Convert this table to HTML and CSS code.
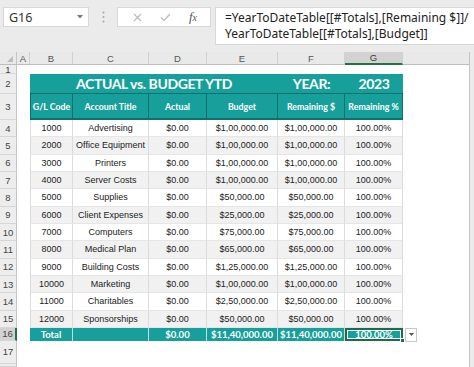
FILE: index.html
```html
<!DOCTYPE html>
<html>
<head>
<meta charset="utf-8">
<link rel="stylesheet" href="styles.css">
</head>
<body>
<div class="fbar">
  <div class="namebox"><span>G16</span><svg width="6" height="4" viewBox="0 0 6 4"><polygon points="0,0 6,0 3,3.5" fill="#777"/></svg></div>
  <div class="grip"><svg width="3" height="12" viewBox="0 0 3 12"><circle cx="1.5" cy="1.5" r="1" fill="#a8a8a8"/><circle cx="1.5" cy="6" r="1" fill="#a8a8a8"/><circle cx="1.5" cy="10.5" r="1" fill="#a8a8a8"/></svg></div>
  <div class="fnbox">
    <svg width="9" height="9" viewBox="0 0 9 9"><path d="M1 1 L8 8 M8 1 L1 8" stroke="#bdbdbd" stroke-width="1.3" fill="none"/></svg>
    <svg width="11" height="9" viewBox="0 0 11 9"><path d="M1 4.5 L4 7.5 L10 1" stroke="#bdbdbd" stroke-width="1.3" fill="none"/></svg>
    <span class="fx">f<span class="fxs">x</span></span>
  </div>
  <div class="formula">=YearToDateTable[[#Totals],[Remaining $]]/<br>YearToDateTable[[#Totals],[Budget]]</div>
</div>
<div class="sheet">
  <div class="ch corner"><svg width="6" height="6" viewBox="0 0 6 6"><polygon points="6,0 6,6 0,6" fill="#bcbcbc"/></svg></div>
  <div class="ch">A</div><div class="ch">B</div><div class="ch">C</div><div class="ch">D</div><div class="ch">E</div><div class="ch">F</div><div class="ch sel">G</div><div class="ch last"></div>

  <div class="rh">1</div><div class="blank"></div>

  <div class="rh">2</div><div></div>
  <div class="t title">ACTUAL vs. BUDGET YTD</div><div class="t">YEAR:</div><div class="t">2023</div><div></div>

  <div class="rh">3</div><div></div>
  <div class="h first">G/L Code</div><div class="h">Account Title</div><div class="h">Actual</div><div class="h">Budget</div><div class="h">Remaining $</div><div class="h">Remaining %</div><div></div>

  <div class="rh">4</div><div></div><div class="c first">1000</div><div class="c">Advertising</div><div class="c">$0.00</div><div class="c">$1,00,000.00</div><div class="c">$1,00,000.00</div><div class="c">100.00%</div><div></div>
  <div class="rh">5</div><div></div><div class="c g first">2000</div><div class="c g">Office Equipment</div><div class="c g">$0.00</div><div class="c g">$1,00,000.00</div><div class="c g">$1,00,000.00</div><div class="c g">100.00%</div><div></div>
  <div class="rh">6</div><div></div><div class="c first">3000</div><div class="c">Printers</div><div class="c">$0.00</div><div class="c">$1,00,000.00</div><div class="c">$1,00,000.00</div><div class="c">100.00%</div><div></div>
  <div class="rh">7</div><div></div><div class="c g first">4000</div><div class="c g">Server Costs</div><div class="c g">$0.00</div><div class="c g">$1,00,000.00</div><div class="c g">$1,00,000.00</div><div class="c g">100.00%</div><div></div>
  <div class="rh">8</div><div></div><div class="c first">5000</div><div class="c">Supplies</div><div class="c">$0.00</div><div class="c">$50,000.00</div><div class="c">$50,000.00</div><div class="c">100.00%</div><div></div>
  <div class="rh">9</div><div></div><div class="c g first">6000</div><div class="c g">Client Expenses</div><div class="c g">$0.00</div><div class="c g">$25,000.00</div><div class="c g">$25,000.00</div><div class="c g">100.00%</div><div></div>
  <div class="rh">10</div><div></div><div class="c first">7000</div><div class="c">Computers</div><div class="c">$0.00</div><div class="c">$75,000.00</div><div class="c">$75,000.00</div><div class="c">100.00%</div><div></div>
  <div class="rh">11</div><div></div><div class="c g first">8000</div><div class="c g">Medical Plan</div><div class="c g">$0.00</div><div class="c g">$65,000.00</div><div class="c g">$65,000.00</div><div class="c g">100.00%</div><div></div>
  <div class="rh">12</div><div></div><div class="c first">9000</div><div class="c">Building Costs</div><div class="c">$0.00</div><div class="c">$1,25,000.00</div><div class="c">$1,25,000.00</div><div class="c">100.00%</div><div></div>
  <div class="rh">13</div><div></div><div class="c g first">10000</div><div class="c g">Marketing</div><div class="c g">$0.00</div><div class="c g">$1,00,000.00</div><div class="c g">$1,00,000.00</div><div class="c g">100.00%</div><div></div>
  <div class="rh">14</div><div></div><div class="c first">11000</div><div class="c">Charitables</div><div class="c">$0.00</div><div class="c">$2,50,000.00</div><div class="c">$2,50,000.00</div><div class="c">100.00%</div><div></div>
  <div class="rh">15</div><div></div><div class="c g first">12000</div><div class="c g">Sponsorships</div><div class="c g">$0.00</div><div class="c g">$50,000.00</div><div class="c g">$50,000.00</div><div class="c g">100.00%</div><div></div>

  <div class="rh selrow">16</div><div></div>
  <div class="tot">Total</div><div class="tot"></div><div class="tot">$0.00</div><div class="tot">$11,40,000.00</div><div class="tot">$11,40,000.00</div>
  <div class="tot active">100.00%<span class="handle"></span><span class="dd"><svg width="5" height="3" viewBox="0 0 5 3"><polygon points="0,0 5,0 2.5,3" fill="#555"/></svg></span></div><div></div>

  <div class="rh">17</div><div class="blank"></div>
  <div class="rh"></div><div class="blank"></div>
</div>
</body>
</html>
```

FILE: styles.css
```css
* { box-sizing: border-box; margin: 0; padding: 0; }
body {
  width: 474px;
  height: 367px;
  overflow: hidden;
  background: #ebebeb;
  font-family: "Liberation Sans", Arial, sans-serif;
}
.fbar {
  display: flex;
  align-items: flex-start;
  height: 52px;
  padding: 7px 0 0 3px;
}
.namebox {
  width: 86px;
  height: 20px;
  background: #fff;
  border: 1px solid #d8d8d8;
  display: flex;
  align-items: center;
  justify-content: space-between;
  padding: 0 5px 0 5px;
  font: 12.5px "Noto Sans", sans-serif;
  color: #333;
}
.grip {
  width: 28px;
  height: 20px;
  display: flex;
  align-items: center;
  justify-content: center;
}
.fnbox {
  width: 94px;
  height: 20px;
  background: #fff;
  border: 1px solid #d8d8d8;
  display: flex;
  align-items: center;
  justify-content: space-around;
  padding: 0 4px 0 6px;
  margin-right: 4px;
}
.fx {
  font: italic 13px "Liberation Serif", serif;
  color: #555;
}
.fxs { font-size: 10px; }
.formula {
  flex: 1;
  height: 38px;
  background: #fff;
  border: 1px solid #d8d8d8;
  border-right: none;
  padding: 2px 0 0 9px;
  font: 12px/16px "Noto Sans", sans-serif;
  color: #222;
  white-space: nowrap;
  overflow: hidden;
}
.sheet {
  display: grid;
  width: 470px;
  height: 315px;
  grid-template-columns: 17px 13px 43px 76px 58px 71px 67px 58px 1fr;
  grid-template-rows: 13px 9px 20px 26px repeat(12, 17.33px) 13px 23px 1fr;
  background: #fff;
  border-right: 1px solid #c4c4c4;
}
.ch {
  background: #e9e9e9;
  border-right: 1px solid #d0d0d0;
  border-bottom: 1px solid #bdbdbd;
  font: 9.5px "Liberation Sans", sans-serif;
  color: #555;
  display: flex;
  align-items: center;
  justify-content: center;
}
.ch.corner {
  justify-content: flex-end;
  align-items: flex-end;
  padding: 0 3px 2px 0;
  border-right: 1px solid #c6c6c6;
}
.ch.last { border-right: none; }
.ch.sel {
  background: #d2d2d2;
  border-bottom: 2px solid #217346;
  color: #3a3a3a;
}
.rh {
  background: #ededed;
  border-right: 1px solid #c6c6c6;
  border-bottom: 1px solid #d6d6d6;
  font: 9.5px "Liberation Sans", sans-serif;
  color: #444;
  display: flex;
  align-items: center;
  justify-content: center;
  overflow: hidden;
}
.rh.selrow {
  background: #d2d2d2;
  border-right: 2px solid #217346;
}
.blank { grid-column: 2 / -1; }
.t {
  background: #17a09b;
  color: #fff;
  font: bold 14px "Lato", sans-serif;
  letter-spacing: -0.4px;
  display: flex;
  align-items: center;
  justify-content: center;
  border-bottom: 1px solid #0f6f6b;
}
.title { grid-column: span 4; }
.h {
  background: #17a09b;
  color: #fff;
  font: bold 8.8px "Lato", sans-serif;
  display: flex;
  align-items: center;
  justify-content: center;
  border-right: 1px solid #0f6f6b;
  border-bottom: 2px solid #0f6f6b;
  white-space: nowrap;
}
.h.first { border-left: 1px solid #0f6f6b; }
.c {
  background: #fff;
  color: #222;
  font: 9px "Liberation Sans", sans-serif;
  display: flex;
  align-items: center;
  justify-content: center;
  border-right: 1px solid #dcdcdc;
  border-bottom: 1px solid #e6e6e6;
  white-space: nowrap;
}
.c.first { border-left: 1px solid #dcdcdc; }
.c.g { background: #f1f1f1; }
.tot {
  background: #17a09b;
  color: #fff;
  font: bold 9.5px "Lato", sans-serif;
  display: flex;
  align-items: center;
  justify-content: center;
  border-right: 1px solid #b8e2e0;
  white-space: nowrap;
}
.tot.active {
  position: relative;
  border: 2px solid #1d6b4a;
  box-shadow: inset 0 0 0 1px #fff;
}
.handle {
  position: absolute;
  right: -4px;
  bottom: -4px;
  width: 5px;
  height: 5px;
  background: #1d6b4a;
  border: 1px solid #fff;
}
.dd {
  position: absolute;
  left: 58px;
  top: -2px;
  width: 12px;
  height: 14px;
  background: #fff;
  border: 1px solid #c8c8c8;
  display: flex;
  align-items: center;
  justify-content: center;
}
```
